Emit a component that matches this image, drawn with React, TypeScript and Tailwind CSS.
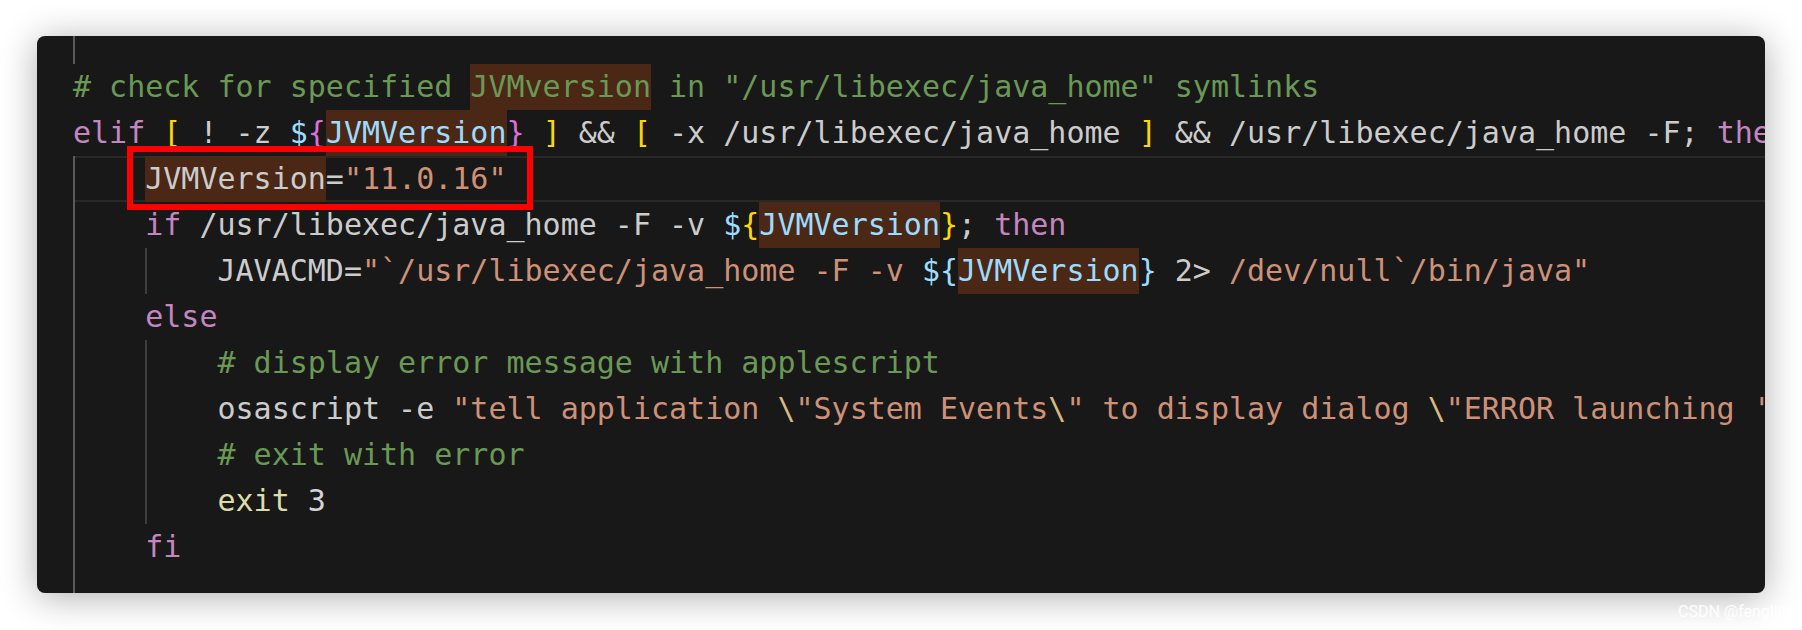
type Tok = { t: string; c?: string; hl?: boolean };

const C = {
  txt: "text-[#cccccc]",
  kw: "text-[#c586c0]",
  cm: "text-[#6a9955]",
  str: "text-[#ce9178]",
  vr: "text-[#9cdcfe]",
  gold: "text-[#ffd700]",
  orch: "text-[#da70d6]",
  esc: "text-[#d7ba7d]",
  fn: "text-[#dcdcaa]",
  num: "text-[#d4d4d4]",
};

type Line = { indent: number; toks: Tok[]; current?: boolean };

const lines: Line[] = [
  {
    indent: 0,
    toks: [
      { t: "# check for specified ", c: C.cm },
      { t: "JVMversion", c: C.cm, hl: true },
      { t: ' in "/usr/libexec/java_home" symlinks', c: C.cm },
    ],
  },
  {
    indent: 0,
    toks: [
      { t: "elif", c: C.kw },
      { t: " ", c: C.txt },
      { t: "[", c: C.gold },
      { t: " ! -z ", c: C.txt },
      { t: "$", c: C.vr },
      { t: "{", c: C.orch },
      { t: "JVMVersion", c: C.vr, hl: true },
      { t: "}", c: C.orch },
      { t: " ", c: C.txt },
      { t: "]", c: C.gold },
      { t: " && ", c: C.txt },
      { t: "[", c: C.gold },
      { t: " -x /usr/libexec/java_home ", c: C.txt },
      { t: "]", c: C.gold },
      { t: " && /usr/libexec/java_home -F; ", c: C.txt },
      { t: "then", c: C.kw },
    ],
  },
  {
    indent: 1,
    current: true,
    toks: [
      { t: "JVMVersion", c: C.txt, hl: true },
      { t: "=", c: C.txt },
      { t: '"11.0.16"', c: C.str },
    ],
  },
  {
    indent: 1,
    toks: [
      { t: "if", c: C.kw },
      { t: " /usr/libexec/java_home -F -v ", c: C.txt },
      { t: "$", c: C.vr },
      { t: "{", c: C.gold },
      { t: "JVMVersion", c: C.vr, hl: true },
      { t: "}", c: C.gold },
      { t: "; ", c: C.txt },
      { t: "then", c: C.kw },
    ],
  },
  {
    indent: 2,
    toks: [
      { t: "JAVACMD=", c: C.txt },
      { t: '"`/usr/libexec/java_home -F -v ', c: C.str },
      { t: "${", c: C.vr },
      { t: "JVMVersion", c: C.vr, hl: true },
      { t: "}", c: C.vr },
      { t: " 2>", c: C.txt },
      { t: ' /dev/null`/bin/java"', c: C.str },
    ],
  },
  { indent: 1, toks: [{ t: "else", c: C.kw }] },
  { indent: 2, toks: [{ t: "# display error message with applescript", c: C.cm }] },
  {
    indent: 2,
    toks: [
      { t: "osascript -e ", c: C.txt },
      { t: '"tell application ', c: C.str },
      { t: "\\", c: C.esc },
      { t: '"System Events', c: C.str },
      { t: "\\", c: C.esc },
      { t: '" to display dialog ', c: C.str },
      { t: "\\", c: C.esc },
      { t: "\"ERROR launching '$(basename $0)'", c: C.str },
    ],
  },
  { indent: 2, toks: [{ t: "# exit with error", c: C.cm }] },
  {
    indent: 2,
    toks: [
      { t: "exit", c: C.fn },
      { t: " 3", c: C.num },
    ],
  },
  { indent: 1, toks: [{ t: "fi", c: C.kw }] },
];

const Guides = ({ n }: { n: number }) => (
  <>
    {n > 0 && <div className="w-[72.24px] shrink-0 border-l-2 border-[#5a5a5a]" />}
    {n > 1 && <div className="w-[72.24px] shrink-0 border-l-2 border-[#3e3e3e]" />}
  </>
);

export default function App() {
  return (
    <div className="relative w-[1802px] h-[630px] overflow-hidden bg-white pl-[37px] pt-[36px] font-['DejaVu_Sans_Mono',monospace]">
      <div className="relative flex h-[557px] w-[1728px] flex-col overflow-hidden rounded-lg bg-[#181818] shadow-[0_4px_36px_rgba(0,0,0,0.32)] text-[30px]">
        <div className="flex h-[28px] shrink-0 pl-[36px]">
          <Guides n={1} />
        </div>
        {lines.map((ln, i) => (
          <div key={i} className="flex h-[46px] shrink-0 pl-[36px]">
            <div
              className={
                "flex flex-1 whitespace-pre leading-[46px] " +
                (ln.current ? "shadow-[inset_0_2px_0_#282828,inset_0_-2px_0_#282828]" : "")
              }
            >
              <Guides n={ln.indent} />
              {ln.toks.map((tk, j) => (
                <span key={j} className={tk.c + (tk.hl ? " bg-[#4b2815]" : "")}>
                  {tk.t}
                </span>
              ))}
            </div>
          </div>
        ))}
        <div className="flex flex-1 pl-[36px]">
          <Guides n={1} />
        </div>
        <div className="absolute left-[90px] top-[110px] h-[64px] w-[406px] border-[6px] border-[#ff0000]" />
      </div>
      <div className="absolute left-[1678px] top-[602px] font-['Roboto',sans-serif] text-[16px] leading-[20px] text-white/90">
        CSDN @fenglllle
      </div>
    </div>
  );
}
